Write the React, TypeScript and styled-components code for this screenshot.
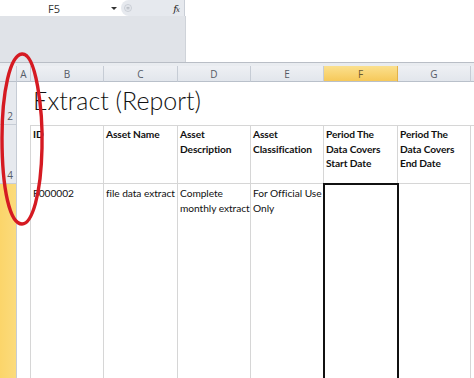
import React from "react";
import styled, { createGlobalStyle } from "styled-components";

const Global = createGlobalStyle`
  html, body { margin: 0; padding: 0; background: #ffffff; }
  body { width: 474px; height: 378px; overflow: hidden; font-family: Lato, "Open Sans", sans-serif; }
`;

const Page = styled.div`
  position: relative;
  width: 474px;
  height: 378px;
  display: flex;
  flex-direction: column;
  background: #fff;
  overflow: hidden;
`;

const TopBar = styled.div`
  display: flex;
  height: 16px;
  flex: none;
`;

const NameBox = styled.div`
  width: 121px;
  display: flex;
  align-items: center;
  background: #fff;
  font-family: "Open Sans", sans-serif;
  font-size: 11px;
  color: #333;
`;

const NameText = styled.span`
  width: 104px;
  text-align: center;
  padding-left: 2px;
`;

const Arrow = styled.span`
  width: 0;
  height: 0;
  border-left: 3px solid transparent;
  border-right: 3px solid transparent;
  border-top: 3px solid #333;
  margin-left: 5px;
`;

const FormulaPill = styled.div`
  width: 64px;
  display: flex;
  align-items: center;
  justify-content: space-between;
  background: #e6e9ee;
  border-radius: 8px 0 0 8px;
  border-right: 1px solid #c9ced6;
  padding: 0 5px 0 3px;
  box-sizing: border-box;
`;

const Fx = styled.span`
  font-family: "DejaVu Serif", "Liberation Serif", serif;
  font-style: italic;
  font-size: 10px;
  color: #222;
  letter-spacing: -1px;
  & small { font-size: 7px; }
`;

const Blank = styled.div`
  flex: 1;
  background: #fff;
`;

const RibbonRow = styled.div`
  display: flex;
  height: 46px;
  flex: none;
`;

const RibbonGray = styled.div`
  width: 185px;
  background: #e0e3e8;
  border-right: 1px solid #cfd3d9;
`;

const Divider = styled.div`
  height: 3px;
  flex: none;
  border-top: 1px solid #b9bec6;
  background: #e9ecf0;
`;

const Sheet = styled.div`
  flex: none;
  display: grid;
  grid-template-columns: 17px 14px 73px 74px 73px 73px 74px 73px 1fr;
  grid-template-rows: 16px 43px 59px 220px;
`;

const ColHead = styled.div<{ $sel?: boolean }>`
  display: flex;
  align-items: center;
  justify-content: center;
  font-family: "Open Sans", sans-serif;
  font-size: 10px;
  color: ${(p) => (p.$sel ? "#6a5a30" : "#555b66")};
  background: ${(p) =>
    p.$sel ? "linear-gradient(#fbe08e, #f6c95a)" : "linear-gradient(#eef0f4, #e2e6ec)"};
  border-right: 1px solid ${(p) => (p.$sel ? "#e2b24a" : "#c6ccd5")};
  border-bottom: 1px solid #b9c0ca;
  box-sizing: border-box;
`;

const RowHead = styled.div<{ $sel?: boolean; $row: number }>`
  grid-column: 1;
  grid-row: ${(p) => p.$row};
  display: flex;
  align-items: flex-end;
  justify-content: flex-end;
  padding: 0 3px 1px 0;
  font-family: "Open Sans", sans-serif;
  font-size: 10px;
  color: #555b66;
  background: ${(p) => (p.$sel ? "linear-gradient(90deg, #fbd56a, #fbdb7c)" : "#e6e9ee")};
  border-right: 1px solid #c6ccd5;
  border-bottom: 1px solid #c6ccd5;
  box-sizing: border-box;
`;

const ColA = styled.div<{ $row: number }>`
  grid-column: 2;
  grid-row: ${(p) => p.$row};
  border-right: ${(p) => (p.$row > 2 ? "1px solid #d6d6d6" : "none")};
`;

const Title = styled.div`
  grid-column: 3 / 10;
  grid-row: 2;
  font-family: Lato, sans-serif;
  font-weight: 300;
  font-size: 25px;
  color: #111;
  padding: 3px 0 0 3px;
  margin-left: -1px;
  line-height: 30px;
  white-space: nowrap;
`;

const Cell = styled.div<{ $bold?: boolean; $sel?: boolean; $top?: boolean; $open?: boolean }>`
  font-family: Lato, sans-serif;
  font-size: 10.2px;
  letter-spacing: ${(p) => (p.$bold ? "-0.1px" : "-0.05px")};
  font-weight: ${(p) => (p.$bold ? 700 : 400)};
  line-height: 14.5px;
  color: #111;
  padding: ${(p) => (p.$bold ? "1px 2px 0 2px" : "2px 2px 0 2px")};
  border-right: 1px solid #d6d6d6;
  border-bottom: ${(p) => (p.$open ? "none" : "1px solid #d6d6d6")};
  border-top: ${(p) => (p.$top ? "1px solid #d6d6d6" : "none")};
  box-sizing: border-box;
  white-space: pre;
  outline: ${(p) => (p.$sel ? "2px solid #111" : "none")};
  outline-offset: -1px;
  position: ${(p) => (p.$sel ? "relative" : "static")};
  z-index: ${(p) => (p.$sel ? 1 : 0)};
`;

const Overlay = styled.svg`
  position: absolute;
  left: 0;
  top: 0;
  pointer-events: none;
`;

const cols = ["", "A", "B", "C", "D", "E", "F", "G", ""];
const headers = [
  "ID",
  "Asset Name",
  "Asset\nDescription",
  "Asset\nClassification",
  "Period The\nData Covers\nStart Date",
  "Period The\nData Covers\nEnd Date",
];
const data = ["F000002", "file data extract", "Complete\nmonthly extract", "For Official Use\nOnly", "", ""];

export default function App() {
  return (
    <>
      <Global />
      <Page>
        <TopBar>
          <NameBox>
            <NameText>F5</NameText>
            <Arrow />
          </NameBox>
          <FormulaPill>
            <svg width="8" height="8" viewBox="0 0 8 8">
              <circle cx="4" cy="4" r="3.5" fill="none" stroke="#c3c8d0" strokeWidth="0.8" />
              <path d="M2.5 3.4h3M2.5 4.8h3" stroke="#a9afb8" strokeWidth="0.8" />
            </svg>
            <Fx>
              f<small>x</small>
            </Fx>
          </FormulaPill>
          <Blank />
        </TopBar>
        <RibbonRow>
          <RibbonGray />
          <Blank />
        </RibbonRow>
        <Divider />
        <Sheet>
          {cols.map((c, i) => (
            <ColHead key={i} $sel={c === "F"}>
              {c}
            </ColHead>
          ))}
          <RowHead $row={2}>2</RowHead>
          <ColA $row={2} />
          <Title>Extract (Report)</Title>
          <RowHead $row={3}>4</RowHead>
          <ColA $row={3} />
          {headers.map((h, i) => (
            <Cell key={i} $bold $top>
              {h}
            </Cell>
          ))}
          <Cell $top $open />
          <RowHead $row={4} $sel />
          <ColA $row={4} />
          {data.map((d, i) => (
            <Cell key={i} $sel={i === 4}>
              {d}
            </Cell>
          ))}
          <Cell />
        </Sheet>
        <Overlay width="474" height="378" viewBox="0 0 474 378">
          <path
            d="M22 54 C36 53 43 110 42 148 C41 195 32 224 22 224 C10 224 2 190 2 138 C2 92 10 55 22 54 Z"
            fill="none"
            stroke="#d51a22"
            strokeWidth="3.4"
          />
        </Overlay>
      </Page>
    </>
  );
}
